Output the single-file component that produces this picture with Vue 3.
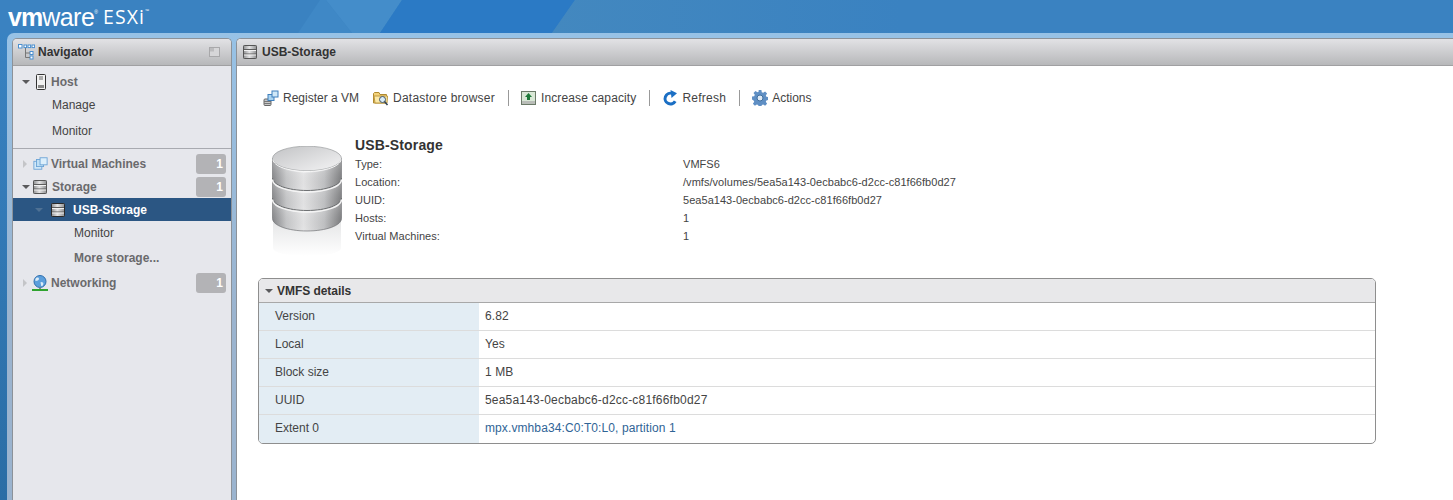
<script setup>
const summary = [
  ['Type:', 'VMFS6'],
  ['Location:', '/vmfs/volumes/5ea5a143-0ecbabc6-d2cc-c81f66fb0d27'],
  ['UUID:', '5ea5a143-0ecbabc6-d2cc-c81f66fb0d27'],
  ['Hosts:', '1'],
  ['Virtual Machines:', '1'],
]

const details = [
  ['Version', '6.82'],
  ['Local', 'Yes'],
  ['Block size', '1 MB'],
  ['UUID', '5ea5a143-0ecbabc6-d2cc-c81f66fb0d27'],
]
</script>

<template>
  <div class="app">
    <header class="topbar">
      <svg class="topbar-art" width="1453" height="33" viewBox="0 0 1453 33">
        <defs>
          <linearGradient id="tail" gradientUnits="userSpaceOnUse" x1="552" x2="900" y1="0" y2="0">
            <stop offset="0" stop-color="#4388bf" />
            <stop offset="1" stop-color="#3a82c1" />
          </linearGradient>
          <linearGradient id="band" x1="0" x2="1" y1="0" y2="0">
            <stop offset="0" stop-color="#8f9092" />
            <stop offset=".45" stop-color="#e4e4e5" />
            <stop offset="1" stop-color="#8f9092" />
          </linearGradient>
        </defs>
        <polygon points="320,0 298,33 352,33 326,0" fill="#3f88c6" />
        <polygon points="326,0 402,0 380,33 352,33" fill="#448dca" />
        <polygon points="402,0 575,0 552,33 380,33" fill="#2b7ac5" />
        <polygon points="575,0 900,0 900,33 552,33" fill="url(#tail)" />
      </svg>
      <div class="logo"><b>vm</b>ware<sup class="reg">®</sup></div>
      <div class="product">ESXi<sup>™</sup></div>
    </header>

    <div class="shell">
      <aside class="panel nav">
        <div class="panel-head">
          <svg class="nav-ico" width="17" height="16" viewBox="0 0 17 16">
            <g fill="#fff" stroke="#4a8fd0">
              <rect x=".5" y=".5" width="3.5" height="3.5" />
              <rect x="6" y="1" width="2.6" height="2.6" />
              <rect x="10" y="1" width="2.6" height="2.6" />
              <rect x="14" y="1" width="2.6" height="2.6" />
              <rect x="12" y="7.5" width="3" height="3" />
              <rect x="12" y="12" width="3" height="3" />
            </g>
            <path d="M7.5 4v9.500H12M7.500 9H12" fill="none" stroke="#777" />
          </svg>
          <span class="panel-title">Navigator</span>
          <svg class="pin" width="11" height="10" viewBox="0 0 11 10">
            <rect x=".5" y=".5" width="10" height="9" fill="#d6d6d8" stroke="#a8a8aa" />
            <rect x="1" y="1" width="4" height="3.5" fill="#bcbcbe" />
          </svg>
        </div>

        <section class="host-group">
          <div class="row row-host">
            <i class="caret open"></i>
            <svg class="tree-ico ico-host" width="10" height="16" viewBox="0 0 10 16">
              <rect x=".5" y=".5" width="9" height="15" rx="1" fill="#f2f2f2" stroke="#333" />
              <path d="M3 3h4M3 5h4" stroke="#666" />
              <rect x="2" y="11" width="6" height="3" fill="#888" />
            </svg>
            <span class="label strong">Host</span>
          </div>
          <div class="row sub row-manage"><span class="label">Manage</span></div>
          <div class="row sub row-monitor"><span class="label">Monitor</span></div>
        </section>

        <section class="tree-group">
          <div class="row">
            <i class="caret closed"></i>
            <svg class="tree-ico ico-vm" width="15" height="15" viewBox="0 0 17 15">
              <rect x="1" y="5" width="9" height="9" fill="#d3e9f8" stroke="#6aa3d6" />
              <rect x="4" y="3" width="8" height="8" fill="#bfdff5" stroke="#6aa3d6" />
              <rect x="8" y="1" width="8" height="8" fill="#dceffb" stroke="#6aa3d6" />
            </svg>
            <span class="label strong">Virtual Machines</span>
            <span class="badge">1</span>
          </div>
          <div class="row">
            <i class="caret open near"></i>
            <svg class="tree-ico ico-store" width="14" height="14" viewBox="0 0 14 14">
              <rect x=".5" y=".5" width="13" height="13" rx=".8" fill="url(#band)" stroke="#555" />
              <path d="M1 4.500h12M1 9h12" stroke="#5c5c5c" />
              <path d="M1 5.500h12M1 10h12" stroke="#f2f2f2" />
            </svg>
            <span class="label strong">Storage</span>
            <span class="badge">1</span>
          </div>
          <div class="row selected">
            <i class="caret open dim"></i>
            <svg class="tree-ico" width="14" height="14" viewBox="0 0 14 14">
              <rect x=".5" y=".5" width="13" height="13" rx=".8" fill="url(#band)" stroke="#2a2a2a" />
              <path d="M1 4.500h12M1 9h12" stroke="#5c5c5c" />
              <path d="M1 5.500h12M1 10h12" stroke="#f2f2f2" />
            </svg>
            <span class="label">USB-Storage</span>
          </div>
          <div class="row sub2 row-deep"><span class="label">Monitor</span></div>
          <div class="row sub2 row-more"><span class="label strong">More storage...</span></div>
          <div class="row row-net">
            <i class="caret closed"></i>
            <svg class="tree-ico ico-net" width="16" height="16" viewBox="0 0 16 16">
              <circle cx="8" cy="6.500" r="6" fill="#5c9fdc" stroke="#2f6fae" />
              <path d="M4 3c2-1 3 0 3 1S5 6 4 6 3 4 4 3zM9 7c2 0 3 1 2 3s-2 1-2 0-1-3 0-3z" fill="#dcecf8" />
              <path d="M8 12.500v1.500" stroke="#888" stroke-width="2" />
              <rect x="0" y="14" width="16" height="2" fill="#2fa32f" />
            </svg>
            <span class="label strong">Networking</span>
            <span class="badge">1</span>
          </div>
        </section>
      </aside>

      <main class="panel content">
        <div class="panel-head">
          <svg class="head-ico" width="14" height="14" viewBox="0 0 14 14">
            <rect x=".5" y=".5" width="13" height="13" rx=".8" fill="url(#band)" stroke="#555" />
            <path d="M1 4.500h12M1 9h12" stroke="#5c5c5c" />
            <path d="M1 5.500h12M1 10h12" stroke="#f2f2f2" />
          </svg>
          <span class="panel-title small">USB-Storage</span>
        </div>

        <div class="toolbar">
          <a class="tool tool-register">
            <svg width="16" height="16" viewBox="0 0 16 16">
              <rect x="1" y="9" width="7" height="6.500" rx="1" fill="#c8c8c8" stroke="#666" />
              <path d="M1 11.500h7M1 13.500h7" stroke="#777" />
              <rect x="5" y="4.500" width="6" height="6" fill="#a9d3f0" stroke="#3f7fbc" />
              <rect x="9" y="1" width="6" height="6" fill="#cfe8f8" stroke="#3f7fbc" />
            </svg>
            Register a VM
          </a>
          <a class="tool tool-browse">
            <svg width="16" height="16" viewBox="0 0 16 16">
              <path d="M.5 3.500V13h13V4.500H7L6 2.500H1.500z" fill="#f3d27a" stroke="#b08a30" />
              <path d="M1 6h13.500L14 13H2z" fill="#fbe9a8" stroke="#c09a40" />
              <circle cx="9.500" cy="9.500" r="3" fill="#d8ecf8" stroke="#456" />
              <path d="M11.500 11.500l3 3.500" stroke="#345" stroke-width="1.600" />
            </svg>
            Datastore browser
          </a>
          <span class="sep"></span>
          <a class="tool tool-grow">
            <svg width="15" height="14" viewBox="0 0 15 14">
              <rect x=".5" y=".5" width="14" height="13" fill="#d9e8d6" stroke="#6b7a68" />
              <rect x="1" y="10" width="13" height="3" fill="#b9bdb8" />
              <path d="M7.500 2L11 6H9v3H6V6H4z" fill="#1f7a3a" />
            </svg>
            Increase capacity
          </a>
          <span class="sep"></span>
          <a class="tool tool-refresh">
            <svg width="15" height="16" viewBox="0 0 15 16">
              <path d="M12.200 11.200A5.400 5.400 0 1 1 9 3.400" fill="none" stroke="#1b6fc4" stroke-width="3" />
              <path d="M7.500 0L14 3.200 8.500 8z" fill="#1b6fc4" />
            </svg>
            Refresh
          </a>
          <span class="sep"></span>
          <a class="tool">
            <svg width="16" height="16" viewBox="0 0 16 16">
              <path d="M6.600 0h2.800l.4 2.200 1.400.6 1.900-1.300 2 2-1.300 1.900.6 1.400 2.100.4v2.800l-2.100.4-.6 1.400 1.300 1.900-2 2-1.900-1.300-1.400.6-.4 2.100H6.600l-.4-2.100-1.400-.6-1.900 1.300-2-2 1.300-1.900-.6-1.400L0 9.400V6.600l2.200-.4.6-1.400L1.500 2.900l2-2 1.900 1.300 1.400-.6z" fill="#5f8fc4" />
              <circle cx="8" cy="8" r="3" fill="#dce8f4" stroke="#3f6f9f" />
            </svg>
            Actions
          </a>
        </div>

        <div class="info">
          <svg class="disk" width="70" height="110" viewBox="0 0 70 110">
            <defs>
              <linearGradient id="metal" x1="0" x2="1" y1="0" y2="0">
                <stop offset="0" stop-color="#8c8d90" />
                <stop offset=".2" stop-color="#d4d5d7" />
                <stop offset=".45" stop-color="#f6f6f7" />
                <stop offset=".75" stop-color="#cfd0d2" />
                <stop offset="1" stop-color="#828385" />
              </linearGradient>
              <linearGradient id="cap" x1="0" x2="1" y1="0" y2="1">
                <stop offset="0" stop-color="#c2c3c5" />
                <stop offset="1" stop-color="#f4f4f5" />
              </linearGradient>
              <linearGradient id="fade" x1="0" x2="0" y1="0" y2="1">
                <stop offset="0" stop-color="#e3e4e5" />
                <stop offset="1" stop-color="#ffffff" />
              </linearGradient>
              <linearGradient id="shade" x1="0" x2="0" y1="0" y2="1">
                <stop offset="0" stop-color="#fff" stop-opacity=".25" />
                <stop offset="1" stop-color="#000" stop-opacity=".07" />
              </linearGradient>
            </defs>
            <path d="M1 72c0 7 15 12.500 34 12.500S69 79 69 72v30c0 5-15 8-34 8S1 107 1 102z" fill="url(#fade)" />
            <path d="M.5 12.500v60c0 7 15.500 12.500 34.500 12.500s34.500-5.500 34.500-12.500v-60z" fill="url(#metal)" stroke="#77797b" stroke-width=".7" />
            <g fill="url(#shade)">
              <path d="M.5 14c0 7 15.500 12.500 34.500 12.500S69.500 21 69.500 14V32c0 7-15.500 12.500-34.500 12.500S.5 39 .5 32z" />
              <path d="M.5 34c0 7 15.500 12.500 34.500 12.500S69.500 41 69.500 34V52c0 7-15.500 12.500-34.500 12.500S.5 59 .5 52z" />
              <path d="M.5 54c0 7 15.500 12.500 34.500 12.500S69.500 61 69.500 54V72.500c0 7-15.500 12.500-34.500 12.500S.5 79.500 .5 72.500z" />
            </g>
            <g fill="none">
              <path d="M.5 32c0 7 15.500 12.500 34.500 12.500S69.500 39 69.500 32" stroke="#6e7072" />
              <path d="M.5 33.500c0 7 15.500 12.500 34.500 12.500S69.500 40.500 69.500 33.500" stroke="#f4f4f4" stroke-width="1.500" />
              <path d="M.5 52c0 7 15.500 12.500 34.500 12.500S69.500 59 69.500 52" stroke="#6e7072" />
              <path d="M.5 53.500c0 7 15.500 12.500 34.500 12.500S69.500 60.500 69.500 53.500" stroke="#f4f4f4" stroke-width="1.500" />
            </g>
            <ellipse cx="35" cy="12.500" rx="34.500" ry="12.300" fill="url(#cap)" stroke="#9a9c9e" stroke-width=".7" />
            <path d="M1 13.500c0 6.500 15.500 12 34 12s34-5.500 34-12" fill="none" stroke="#f8f8f8" />
          </svg>
          <div class="info-text">
            <h2 class="info-title">USB-Storage</h2>
            <div v-for="item in summary" :key="item[0]" class="info-row">
              <span class="info-key">{{ item[0] }}</span>
              <span>{{ item[1] }}</span>
            </div>
          </div>
        </div>

        <div class="details">
          <div class="details-head"><i class="caret open"></i>VMFS details</div>
          <div v-for="item in details" :key="item[0]" class="details-row">
            <div class="details-key">{{ item[0] }}</div>
            <div class="details-val" :class="{ wide: item[0] === 'UUID' }">{{ item[1] }}</div>
          </div>
          <div class="details-row last">
            <div class="details-key">Extent 0</div>
            <div class="details-val"><a class="link">mpx.vmhba34:C0:T0:L0, partition 1</a></div>
          </div>
        </div>
      </main>
    </div>
  </div>
</template>

<style>
body {
  margin: 0;
  overflow: hidden;
}
</style>

<style scoped>
.app {
  height: 500px;
  display: flex;
  flex-direction: column;
  overflow: hidden;
  background: linear-gradient(#3a84c4, #2a6da5);
  font-family: "Liberation Sans", Arial, sans-serif;
  font-size: 12px;
  color: #333;
}
.topbar {
  position: relative;
  flex: 0 0 33px;
  display: flex;
  align-items: center;
  padding-left: 8px;
  background: #3a82c1;
  color: #fff;
  overflow: hidden;
}
.topbar-art {
  position: absolute;
  top: 0;
  left: 0;
}
.logo {
  position: relative;
  width: 95px;
  font-size: 25px;
  letter-spacing: -0.5px;
  line-height: 30px;
  white-space: nowrap;
}
.logo b {
  font-weight: 700;
  letter-spacing: -1px;
}
.reg {
  font-size: 5px;
  letter-spacing: 0;
  vertical-align: 12px;
  line-height: 0;
}
.product {
  position: relative;
  font-family: "Open Sans", sans-serif;
  font-size: 19.5px;
  letter-spacing: 1.1px;
  line-height: 30px;
}
.product sup {
  font-size: 5px;
  letter-spacing: 0;
  vertical-align: 11px;
  line-height: 0;
}
.shell {
  flex: 1;
  min-height: 0;
  display: flex;
  gap: 4px;
  margin-left: 7px;
  padding: 5px 0 0 5px;
  border-top-left-radius: 7px;
  background: linear-gradient(#97c2e6, #9bb4cf 60%);
}
.panel {
  display: flex;
  flex-direction: column;
  box-sizing: border-box;
  border: 1px solid #8c9299;
  border-bottom: 0;
  border-radius: 5px 5px 0 0;
  overflow: hidden;
}
.nav {
  flex: 0 0 220px;
  background: #e6e7ec;
}
.content {
  flex: 1;
  min-width: 0;
  border-right: 0;
  border-top-right-radius: 0;
  background: #fff;
}
.panel-head {
  flex: 0 0 26px;
  display: flex;
  align-items: center;
  border-bottom: 1px solid #a0a0a2;
  background: linear-gradient(#e2e2e5, #b7b8ba);
}
.nav-ico {
  margin-left: 5px;
}
.panel-title {
  margin-left: 3px;
  font-weight: 700;
  font-size: 12px;
  color: #333;
}
.panel-title.small {
  margin-left: 5px;
}
.head-ico {
  margin-left: 6px;
}
.pin {
  margin-left: auto;
  margin-right: 11px;
}
.host-group {
  padding: 5px 0 2px;
  border-bottom: 1px solid #a8aab0;
}
.tree-group {
  padding-top: 3px;
}
.row {
  display: flex;
  align-items: center;
  height: 23px;
  padding-left: 9px;
  color: #444;
}
.row-host {
  height: 22px;
}
.row-manage {
  height: 23px;
}
.row-monitor {
  height: 30px;
}
.row-deep {
  height: 24px;
}
.row-more {
  height: 25px;
}
.row-net {
  height: 26px;
}
.sub {
  padding-left: 39px;
}
.sub2 {
  padding-left: 61px;
}
.label {
  white-space: nowrap;
}
.strong {
  font-weight: 700;
  color: #6a6a6c;
}
.caret {
  flex: 0 0 auto;
  display: block;
  width: 0;
  height: 0;
  margin-right: 6px;
}
.caret.open {
  border-left: 4px solid transparent;
  border-right: 4px solid transparent;
  border-top: 4px solid #5a5a5c;
}
.caret.near {
  margin-right: 3px;
}
.caret.closed {
  margin-left: 1px;
  margin-right: 7px;
  border-top: 4px solid transparent;
  border-bottom: 4px solid transparent;
  border-left: 4px solid #c4c5c8;
}
.caret.dim {
  margin-left: 13px;
  margin-right: 8px;
  border-top-color: #4f7194;
}
.tree-ico {
  flex: 0 0 auto;
  margin-right: 4px;
}
.ico-host,
.ico-store {
  margin-right: 5px;
}
.ico-vm {
  margin-left: -1px;
  margin-right: 3px;
}
.ico-net {
  margin-left: -2px;
  margin-right: 3px;
}
.badge {
  margin-left: auto;
  margin-right: 5px;
  box-sizing: border-box;
  width: 30px;
  height: 20px;
  padding-right: 3px;
  border-radius: 3px;
  background: #b3b3b6;
  color: #fff;
  font-weight: 700;
  line-height: 20px;
  text-align: right;
}
.selected {
  background: #2b5683;
  color: #fff;
  font-weight: 700;
}
.selected .tree-ico {
  margin-right: 8px;
}
.toolbar {
  display: flex;
  align-items: center;
  height: 24px;
  margin-top: 20px;
  padding-left: 26px;
}
.tool {
  display: flex;
  align-items: center;
  gap: 4px;
  white-space: nowrap;
  color: #444;
}
.tool-register {
  margin-right: 14px;
}
.tool-browse {
  letter-spacing: 0.23px;
}
.tool-grow {
  gap: 5px;
  letter-spacing: 0.12px;
}
.tool-refresh {
  margin-left: 1px;
  letter-spacing: 0.25px;
}
.sep {
  width: 1px;
  height: 16px;
  margin: 0 12px 0 13px;
  background: #999;
}
.info {
  display: flex;
  margin-top: 26px;
  padding-left: 35px;
}
.disk {
  flex: 0 0 auto;
  margin-top: 10px;
}
.info-text {
  margin-left: 13px;
  font-size: 11px;
  letter-spacing: 0.04px;
}
.info-title {
  margin: 0;
  font-size: 14px;
  line-height: 19px;
  letter-spacing: 0.15px;
  color: #333;
}
.info-row {
  display: flex;
  height: 18px;
  line-height: 18px;
  color: #444;
}
.info-key {
  width: 328px;
}
.details {
  box-sizing: border-box;
  width: 1118px;
  margin: 22px 0 0 21px;
  border: 1px solid #8e8e8e;
  border-radius: 5px;
  overflow: hidden;
}
.details-head {
  display: flex;
  align-items: center;
  height: 23px;
  padding-left: 6px;
  border-bottom: 1px solid #a8a8a8;
  background: #e8e8ea;
  font-weight: 700;
  letter-spacing: -0.05px;
}
.details-head .caret {
  margin-right: 4px;
}
.details-row {
  display: flex;
  height: 28px;
  line-height: 27px;
  box-sizing: border-box;
  border-bottom: 1px solid #dcdcdc;
}
.details-row.last {
  border-bottom: 0;
}
.details-key {
  box-sizing: border-box;
  width: 220px;
  padding-left: 16px;
  background: #e3edf4;
  color: #444;
}
.details-val {
  padding-left: 6px;
  color: #444;
  letter-spacing: 0.1px;
}
.details-val.wide {
  letter-spacing: 0.2px;
}
.link {
  color: #2f6496;
}
</style>
